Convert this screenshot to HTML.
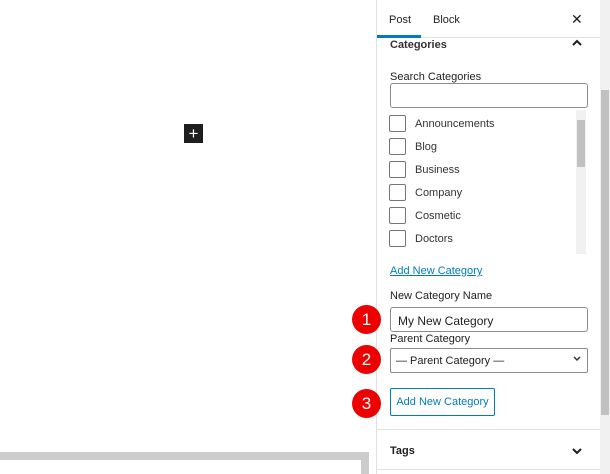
<!DOCTYPE html><html><head><style>
body{margin:0;width:610px;height:474px;position:relative;overflow:hidden;background:#fff;font-family:"Liberation Sans",sans-serif;font-size:11px;color:#1e1e1e}
.a{position:absolute}
.cb{position:absolute;left:389px;width:15px;height:15px;border:1px solid #757575;border-radius:2px;background:#fff}
.lb{position:absolute;left:415px;font-size:11px;color:#333}
.num{position:absolute;left:352px;width:29px;height:29px;border-radius:50%;background:#e00;color:#fff;font-size:17px;text-align:center;line-height:29px}
</style></head><body>
<div class="a" style="left:184px;top:124px;width:19px;height:19px;background:#1e1e1e;color:#fff;font-size:17px;line-height:19px;text-align:center">+</div>
<div class="a" style="left:0;top:452px;width:369px;height:8px;background:#ccc"></div>
<div class="a" style="left:361px;top:452px;width:8px;height:22px;background:#ccc"></div>
<div class="a" style="left:376px;top:0;width:1px;height:474px;background:#e0e0e0"></div>
<div class="a" style="left:377px;top:37px;width:223px;height:1px;background:#e0e0e0"></div>
<div class="a" style="left:389px;top:14px;font-size:11px">Post</div>
<div class="a" style="left:433px;top:14px;font-size:11px">Block</div>
<div class="a" style="left:571px;top:11px;font-size:14px">✕</div>
<div class="a" style="left:377px;top:35px;width:44px;height:3px;background:#007cba"></div>
<div class="a" style="left:390px;top:39px;font-size:11px;font-weight:bold;color:#333">Categories</div>
<svg class="a" style="left:571px;top:38px" width="12" height="10"><path d="M2 7L6 3L10 7" stroke="#1e1e1e" stroke-width="2" fill="none"/></svg>
<div class="a" style="left:390px;top:71px">Search Categories</div>
<div class="a" style="left:390px;top:83px;width:196px;height:23px;border:1px solid #8c8c8c;border-radius:3px"></div>
<div class="cb" style="top:115px"></div><div class="lb" style="top:118px">Announcements</div>
<div class="cb" style="top:138px"></div><div class="lb" style="top:141px">Blog</div>
<div class="cb" style="top:161px"></div><div class="lb" style="top:164px">Business</div>
<div class="cb" style="top:184px"></div><div class="lb" style="top:187px">Company</div>
<div class="cb" style="top:207px"></div><div class="lb" style="top:210px">Cosmetic</div>
<div class="cb" style="top:230px"></div><div class="lb" style="top:233px">Doctors</div>
<div class="a" style="left:576px;top:110px;width:10px;height:144px;background:#f1f1f1"></div>
<div class="a" style="left:577px;top:120px;width:8px;height:47px;background:#c1c1c1"></div>
<div class="a" style="left:390px;top:265px;color:#007cba;text-decoration:underline">Add New Category</div>
<div class="a" style="left:390px;top:290px">New Category Name</div>
<div class="a" style="left:390px;top:307px;width:196px;height:23px;border:1px solid #8c8c8c;border-radius:3px"></div>
<div class="a" style="left:398px;top:314px;font-size:12px">My New Category</div>
<div class="a" style="left:390px;top:333px">Parent Category</div>
<div class="a" style="left:390px;top:348px;width:196px;height:23px;border:1px solid #8c8c8c;border-radius:2px"></div>
<div class="a" style="left:396px;top:355px">— Parent Category —</div>
<svg class="a" style="left:572px;top:355px" width="10" height="8"><path d="M2 2L5 5L8 2" stroke="#333" stroke-width="1.5" fill="none"/></svg>
<div class="a" style="left:390px;top:388px;width:103px;height:26px;border:1px solid #007cba;border-radius:2px;color:#007cba;text-align:center;line-height:26px">Add New Category</div>
<div class="num" style="top:305px">1</div>
<div class="num" style="top:345px">2</div>
<div class="num" style="top:389px">3</div>
<div class="a" style="left:377px;top:429px;width:223px;height:1px;background:#e0e0e0"></div>
<div class="a" style="left:390px;top:445px;font-weight:bold">Tags</div>
<svg class="a" style="left:571px;top:446px" width="12" height="10"><path d="M2 3L6 7L10 3" stroke="#1e1e1e" stroke-width="2" fill="none"/></svg>
<div class="a" style="left:377px;top:469px;width:223px;height:1px;background:#e0e0e0"></div>
<div class="a" style="left:600px;top:0;width:10px;height:474px;background:#f1f1f1"></div>
<div class="a" style="left:601px;top:90px;width:8px;height:325px;background:#c1c1c1"></div>
</body></html>
